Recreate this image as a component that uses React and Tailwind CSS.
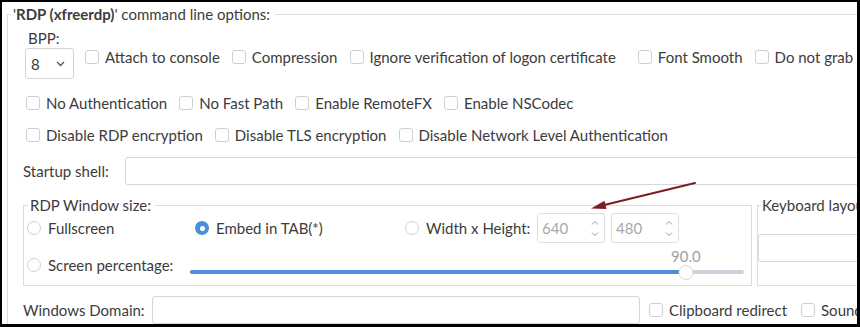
import React from "react";

const txt = "text-[#3c3c3c]";

function Check({ label, className = "" }) {
  return (
    <label className={`flex items-center gap-[6px] h-[18px] whitespace-nowrap ${className}`}>
      <span className="w-[14px] h-[14px] rounded-[3px] border border-[#cfcfcf] bg-white shrink-0" />
      <span>{label}</span>
    </label>
  );
}

function Radio({ label, checked, className = "" }) {
  return (
    <label className={`flex items-center gap-[7px] h-[18px] whitespace-nowrap ${className}`}>
      {checked ? (
        <span className="w-[14px] h-[14px] rounded-full bg-[#4a8fdb] flex items-center justify-center shrink-0">
          <span className="w-[5px] h-[5px] rounded-full bg-white" />
        </span>
      ) : (
        <span className="w-[14px] h-[14px] rounded-full border border-[#d2d2d2] bg-white shrink-0" />
      )}
      <span>{label}</span>
    </label>
  );
}

function Spin({ value, className = "" }) {
  return (
    <div className={`flex items-center justify-between w-[68px] h-[30px] rounded-[3px] border border-[#dadfe6] bg-white pl-[4px] pr-[5px] shrink-0 ${className}`}>
      <span className="text-[#a8a8a8]">{value}</span>
      <div className="flex flex-col gap-[7px]">
        <svg width="8" height="5" viewBox="0 0 8 5">
          <path d="M1 4.5L4 1.5L7 4.5" fill="none" stroke="#9a9a9a" strokeWidth="1" />
        </svg>
        <svg width="8" height="5" viewBox="0 0 8 5">
          <path d="M1 0.5L4 3.5L7 0.5" fill="none" stroke="#9a9a9a" strokeWidth="1" />
        </svg>
      </div>
    </div>
  );
}

export default function App() {
  return (
    <div className="w-[860px] h-[327px] bg-black pt-[2px] pl-[2px] pr-[3px] pb-[3px] font-['Lato',sans-serif] text-[15px] leading-[18px]">
      <div className={`relative w-full h-full bg-white overflow-hidden ${txt}`}>
        <fieldset className="mt-[3px] ml-[5px] w-[900px] border border-[#dcdcdc] pl-[15px]">
          <legend className="ml-[-13px] pl-[3px] pr-[5px]">
            '<b className="font-bold">RDP (xfreerdp)</b>' command line options:
          </legend>

          {/* row 1 */}
          <div className="flex items-end mt-[6px]">
            <div className="flex flex-col">
              <span className="ml-[5px]">BPP:</span>
              <div className="mt-[1px] ml-[2px] w-[49px] h-[31px] rounded-[3px] border border-[#d4d4d4] flex items-center justify-between pl-[5px] pr-[8px]">
                <span>8</span>
                <svg width="9" height="6" viewBox="0 0 9 6">
                  <path d="M1 1L4.5 4.5L8 1" fill="none" stroke="#555" strokeWidth="1.3" />
                </svg>
              </div>
            </div>
            <div className="flex items-center gap-[12px] ml-[11px] mb-[13px]">
              <Check label="Attach to console" />
              <Check label="Compression" />
              <Check label="Ignore verification of logon certificate" />
              <Check label="Font Smooth" className="ml-[10px]" />
              <Check label="Do not grab keyboard" />
            </div>
          </div>

          {/* row 2 */}
          <div className="flex items-center gap-[12px] mt-[15px] ml-[3px]">
            <Check label="No Authentication" />
            <Check label="No Fast Path" />
            <Check label="Enable RemoteFX" />
            <Check label="Enable NSCodec" />
          </div>

          {/* row 3 */}
          <div className="flex items-center gap-[12px] mt-[14px] ml-[3px]">
            <Check label="Disable RDP encryption" />
            <Check label="Disable TLS encryption" />
            <Check label="Disable Network Level Authentication" />
          </div>

          {/* startup shell */}
          <div className="flex items-center mt-[13px]">
            <span className="w-[102px]">Startup shell:</span>
            <div className="w-[760px] h-[28px] rounded-[3px] border border-[#d3d8df] bg-white" />
          </div>

          {/* window size + keyboard */}
          <div className="flex gap-[5px] mt-[11px]">
            <fieldset className="w-[729px] border border-[#dcdcdc] pl-[3px] pr-[7px] pb-[6px]">
              <legend className="ml-[1px] pl-[2px] pr-[4px]">RDP Window size:</legend>
              <div className="flex items-center mt-[-1px] h-[30px]">
                <Radio label="Fullscreen" className="w-[168px]" />
                <Radio label="Embed in TAB(*)" checked className="w-[210px]" />
                <Radio label="Width x Height:" className="w-[132px]" />
                <Spin value="640" />
                <Spin value="480" className="ml-[6px]" />
              </div>
              <div className="flex items-end mt-[4px]">
                <Radio label="Screen percentage:" className="w-[163px] mb-[5px]" />
                <div className="flex-1 flex flex-col">
                  <div className="relative h-[18px]">
                    <span className="absolute left-[89.5%] -translate-x-1/2 text-[#a0a0a0]">90.0</span>
                  </div>
                  <div className="relative h-[14px] flex items-center">
                    <div className="w-full h-[4px] rounded-full bg-[#ccd3de] flex">
                      <div className="w-[89.5%] h-full rounded-full bg-[#4a8fdb]" />
                    </div>
                    <span className="absolute left-[89.5%] -translate-x-1/2 w-[15px] h-[15px] rounded-full bg-white border border-[#d5d9e0]" />
                  </div>
                </div>
              </div>
            </fieldset>
            <fieldset className="w-[200px] border border-[#dcdcdc]">
              <legend className="ml-[3px] pl-[1px]">Keyboard layout:</legend>
              <div className="mt-[20px] h-[28px] rounded-[3px] border border-[#d3d8df] bg-white" />
            </fieldset>
          </div>

          {/* windows domain */}
          <div className="flex items-center mt-[10px]">
            <span className="w-[129px]">Windows Domain:</span>
            <div className="w-[488px] h-[28px] rounded-[3px] border border-[#d3d8df] bg-white" />
            <div className="flex items-center gap-[14px] ml-[9px]">
              <Check label="Clipboard redirect" />
              <Check label="Sound" />
            </div>
          </div>
        </fieldset>

        {/* annotation arrow */}
        <svg className="absolute left-[-2px] top-[-2px] pointer-events-none" width="860" height="327" viewBox="0 0 860 327">
          <line x1="695" y1="183" x2="602" y2="205.5" stroke="#7a1d24" strokeWidth="2" strokeLinecap="round" />
          <polygon points="591,208.5 606.5,209 604.5,200.8" fill="#7a1d24" />
        </svg>
      </div>
    </div>
  );
}
